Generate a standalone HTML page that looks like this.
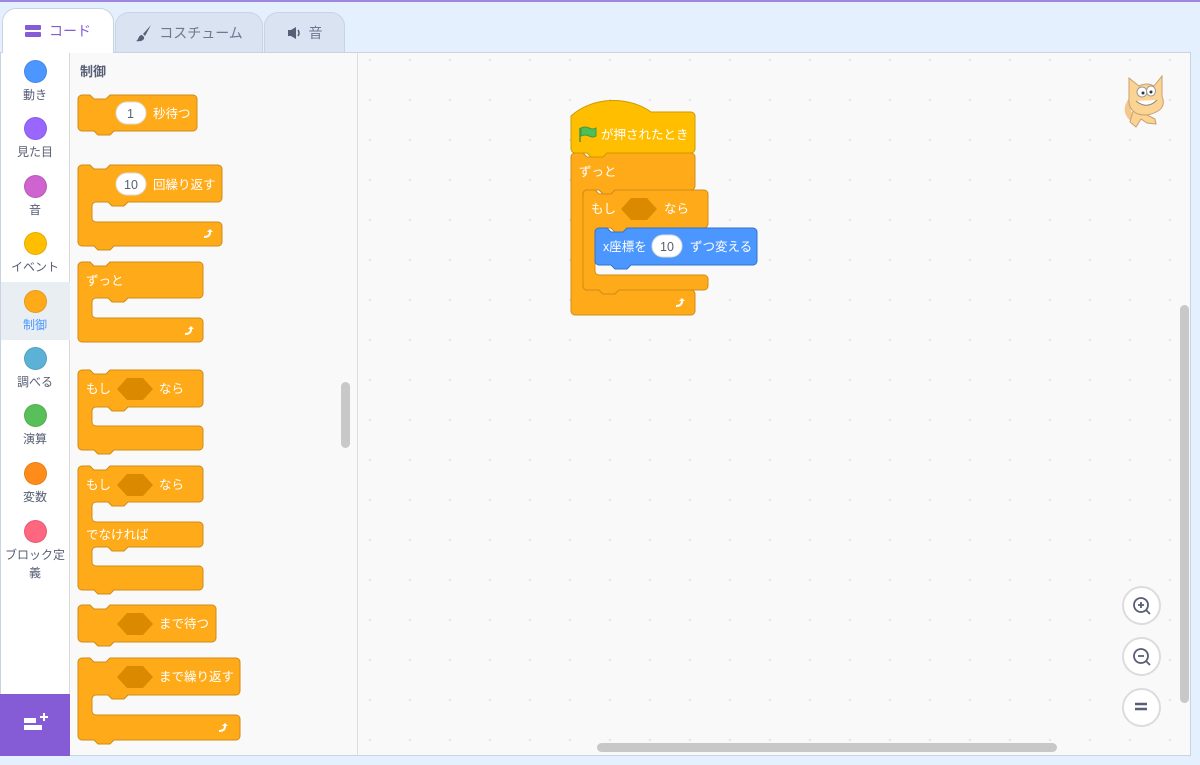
<!DOCTYPE html>
<html><head><meta charset="utf-8"><style>
*{margin:0;padding:0;box-sizing:border-box}
body{width:1200px;height:765px;background:#e5f0ff;font-family:"Liberation Sans","Noto Sans CJK JP",sans-serif;position:relative;overflow:hidden}
.abs{position:absolute}
.tab{position:absolute;top:12px;height:41px;border:1px solid #c9d4e3;border-bottom:none;border-radius:14px 14px 0 0;background:#d9e3f2;color:#6b7a8f;font-size:14px;display:flex;align-items:center;justify-content:center;gap:6px}
.cat{position:absolute;left:2px;width:66px;text-align:center;font-size:12px;color:#575e75}
.cat i{display:block;width:23px;height:23px;border-radius:50%;margin:0 auto 3px;border:1px solid rgba(0,0,0,.1)}
svg text{font-family:"Liberation Sans","Noto Sans CJK JP",sans-serif;font-size:12.5px;fill:#fff}
.zb{position:absolute;left:1122px;width:39px;height:39px;border-radius:50%;background:#fff;border:2px solid #dcdcdc}
</style></head><body>
<div class="abs" style="left:0;top:0;width:1200px;height:2px;background:#9f86e0"></div>
<div class="tab" style="left:2px;top:8px;width:112px;height:45px;background:#fff;color:#855cd6;z-index:2">
<svg width="18" height="14" viewBox="0 0 18 14"><rect x="0" y="1" width="16" height="5" rx="1" fill="#855cd6"/><rect x="0" y="8" width="16" height="5" rx="1" fill="#855cd6"/></svg>コード</div>
<div class="tab" style="left:115px;width:148px"><svg width="18" height="18" viewBox="0 0 18 18"><path d="M16 1 L8 10 L10 12 Z M7 11 C3 11 4 16 1 17 C6 18 10 16 9 13 Z" fill="#575e75"/></svg>コスチューム</div>
<div class="tab" style="left:264px;width:81px"><svg width="16" height="14" viewBox="0 0 16 14"><path d="M1 4h3l5-3v12l-5-3H1z" fill="#575e75"/><path d="M11 4q2 3 0 6" stroke="#575e75" stroke-width="1.5" fill="none"/></svg>音</div>
<div class="abs" style="left:0;top:52px;width:1191px;height:704px;background:#f9f9f9;border:1px solid #c9d4e3"></div>
<div class="abs" style="left:1px;top:53px;width:69px;height:641px;background:#fff;border-right:1px solid #d9d9d9"></div>
<div class="abs" style="left:1px;top:282px;width:69px;height:58px;background:#e9eef2"></div>
<div class="cat" style="top:60px"><i style="background:#4c97ff"></i>動き</div>
<div class="cat" style="top:117px"><i style="background:#9966ff"></i>見た目</div>
<div class="cat" style="top:175px"><i style="background:#cf63cf"></i>音</div>
<div class="cat" style="top:232px"><i style="background:#ffbf00"></i>イベント</div>
<div class="cat" style="top:290px;color:#4c97ff"><i style="background:#ffab19"></i>制御</div>
<div class="cat" style="top:347px"><i style="background:#5cb1d6"></i>調べる</div>
<div class="cat" style="top:404px"><i style="background:#59c059"></i>演算</div>
<div class="cat" style="top:462px"><i style="background:#ff8c1a"></i>変数</div>
<div class="cat" style="top:520px;line-height:18px;left:3px;width:64px"><i style="background:#ff6680"></i>ブロック定<br>義</div>
<div class="abs" style="left:0;top:694px;width:70px;height:62px;background:#855cd6"></div>
<svg class="abs" style="left:22px;top:711px" width="28" height="24" viewBox="0 0 28 24"><rect x="2" y="7" width="12" height="5" fill="#fff"/><rect x="2" y="14" width="18" height="5" fill="#fff"/><path d="M22 2v8M18 6h8" stroke="#fff" stroke-width="2"/></svg>
<div class="abs" style="left:357px;top:53px;width:1px;height:702px;background:#ddd"></div>
<div class="abs" style="left:358px;top:53px;width:832px;height:702px;background-image:radial-gradient(circle,#e2e2e2 1px,transparent 1.2px);background-size:40px 40px;background-position:-8px -13px"></div>
<div class="abs" style="left:80px;top:61px;font-size:13px;font-weight:bold;color:#575e75">制御</div>
<div class="abs" style="left:341px;top:382px;width:9px;height:66px;border-radius:5px;background:#c8c8c8"></div>
<div class="abs" style="left:1180px;top:305px;width:9px;height:398px;border-radius:5px;background:#c8c8c8"></div>
<div class="abs" style="left:597px;top:743px;width:460px;height:9px;border-radius:5px;background:#c8c8c8"></div>

<svg class="abs" style="left:0;top:0" width="1200" height="765">
<defs>
<path id="arr" d="M0 6q5 0 5-4l-2 0 3-3 3 3-2 0q0 6-7 6z" fill="#fff"/>
</defs>
<g fill="#ffab19" stroke="#cf8b17" stroke-width="1">
<path transform="translate(78,95)" d="M0 4a4 4 0 0 1 4-4h8l4 4h12l4-4H115a4 4 0 0 1 4 4V32a4 4 0 0 1-4 4H36l-4 4H20l-4-4H4a4 4 0 0 1-4-4z"/>
<path transform="translate(78,165)" d="M0 4a4 4 0 0 1 4-4h8l4 4h12l4-4H140a4 4 0 0 1 4 4V33a4 4 0 0 1-4 4H50l-4 4H34l-4-4H18a4 4 0 0 0-4 4V53a4 4 0 0 0 4 4H140a4 4 0 0 1 4 4V77a4 4 0 0 1-4 4H36l-4 4H20l-4-4H4a4 4 0 0 1-4-4z"/>
<path transform="translate(78,262)" d="M0 4a4 4 0 0 1 4-4h8l4 4h12l4-4H121a4 4 0 0 1 4 4V32a4 4 0 0 1-4 4H50l-4 4H34l-4-4H18a4 4 0 0 0-4 4V52a4 4 0 0 0 4 4H121a4 4 0 0 1 4 4V76a4 4 0 0 1-4 4H4a4 4 0 0 1-4-4z"/>
<path transform="translate(78,370)" d="M0 4a4 4 0 0 1 4-4h8l4 4h12l4-4H121a4 4 0 0 1 4 4V33a4 4 0 0 1-4 4H50l-4 4H34l-4-4H18a4 4 0 0 0-4 4V52a4 4 0 0 0 4 4H121a4 4 0 0 1 4 4V76a4 4 0 0 1-4 4H36l-4 4H20l-4-4H4a4 4 0 0 1-4-4z"/>
<path transform="translate(78,466)" d="M0 4a4 4 0 0 1 4-4h8l4 4h12l4-4H121a4 4 0 0 1 4 4V32a4 4 0 0 1-4 4H50l-4 4H34l-4-4H18a4 4 0 0 0-4 4V52a4 4 0 0 0 4 4H121a4 4 0 0 1 4 4V77a4 4 0 0 1-4 4H50l-4 4H34l-4-4H18a4 4 0 0 0-4 4V96a4 4 0 0 0 4 4H121a4 4 0 0 1 4 4V120a4 4 0 0 1-4 4H36l-4 4H20l-4-4H4a4 4 0 0 1-4-4z"/>
<path transform="translate(78,605)" d="M0 4a4 4 0 0 1 4-4h8l4 4h12l4-4H134a4 4 0 0 1 4 4V33a4 4 0 0 1-4 4H36l-4 4H20l-4-4H4a4 4 0 0 1-4-4z"/>
<path transform="translate(78,658)" d="M0 4a4 4 0 0 1 4-4h8l4 4h12l4-4H158a4 4 0 0 1 4 4V33a4 4 0 0 1-4 4H50l-4 4H34l-4-4H18a4 4 0 0 0-4 4V53a4 4 0 0 0 4 4H158a4 4 0 0 1 4 4V78a4 4 0 0 1-4 4H36l-4 4H20l-4-4H4a4 4 0 0 1-4-4z"/>
<path transform="translate(571,153)" d="M0 4a4 4 0 0 1 4-4h8l4 4h12l4-4H120a4 4 0 0 1 4 4V33a4 4 0 0 1-4 4H48l-4 4H32l-4-4H16a4 4 0 0 0-4 4V133a4 4 0 0 0 4 4H120a4 4 0 0 1 4 4V158a4 4 0 0 1-4 4H4a4 4 0 0 1-4-4z"/>
<path transform="translate(583,190)" d="M0 4a4 4 0 0 1 4-4h8l4 4h12l4-4H121a4 4 0 0 1 4 4V34a4 4 0 0 1-4 4H48l-4 4H32l-4-4H16a4 4 0 0 0-4 4V81a4 4 0 0 0 4 4H121a4 4 0 0 1 4 4V96a4 4 0 0 1-4 4H36l-4 4H20l-4-4H4a4 4 0 0 1-4-4z"/>
</g>
<path transform="translate(571,100)" d="M0 16C22 -4 58 -4 80 12H120a4 4 0 0 1 4 4V49a4 4 0 0 1-4 4H36l-4 4H20l-4-4H4a4 4 0 0 1-4-4z" fill="#ffbf00" stroke="#cc9900"/>
<path transform="translate(595,228)" d="M0 4a4 4 0 0 1 4-4h8l4 4h12l4-4H158a4 4 0 0 1 4 4V33a4 4 0 0 1-4 4H36l-4 4H20l-4-4H4a4 4 0 0 1-4-4z" fill="#4c97ff" stroke="#3373cc"/>
<g fill="#db8a00">
<path d="M117 389l10-11h16l10 11-10 11h-16z"/>
<path d="M117 485l10-11h16l10 11-10 11h-16z"/>
<path d="M117 624l10-11h16l10 11-10 11h-16z"/>
<path d="M117 677l10-11h16l10 11-10 11h-16z"/>
<path d="M621 209l10-11h16l10 11-10 11h-16z"/>
</g>
<g fill="#fff" stroke="#ddd">
<rect x="116" y="102" width="30" height="22" rx="11"/>
<rect x="116" y="173" width="30" height="22" rx="11"/>
<rect x="652" y="235" width="30" height="22" rx="11"/>
</g>
<g>
<text x="127" y="118" style="fill:#575e75">1</text>
<text x="153" y="118">秒待つ</text>
<text x="124" y="189" style="fill:#575e75">10</text>
<text x="153" y="189">回繰り返す</text>
<text x="86" y="285">ずっと</text>
<text x="86" y="393">もし</text><text x="159" y="393">なら</text>
<text x="86" y="489">もし</text><text x="159" y="489">なら</text>
<text x="86" y="539">でなければ</text>
<text x="159" y="628">まで待つ</text>
<text x="159" y="681">まで繰り返す</text>
<text x="601" y="139">が押されたとき</text>
<text x="579" y="176">ずっと</text>
<text x="591" y="213">もし</text><text x="664" y="213">なら</text>
<text x="603" y="251">x座標を</text>
<text x="660" y="251" style="fill:#575e75">10</text>
<text x="690" y="251">ずつ変える</text>
</g>
<use href="#arr" x="204" y="230"/>
<use href="#arr" x="185" y="327"/>
<use href="#arr" x="219" y="724"/>
<use href="#arr" x="676" y="299"/>
<path d="M580 128v14" stroke="#45993d" stroke-width="1.5"/>
<path d="M581 128q4-2 8 0t7 0v8q-3 2-7 0t-8 0z" fill="#4cbf56" stroke="#45993d"/>
<g transform="translate(1116,72)">
<path d="M14 30q-6 10 4 18" stroke="#f2c98a" stroke-width="6" fill="none" stroke-linecap="round"/>
<path d="M18 36l-4 14 6 5 5-8 6 4 9 1-1-5-8-4 3-8z" fill="#fbd494" stroke="#c8a070"/>
<path d="M13 26l0-20 10 8q8-4 15 0l8-10 0 20q4 10-4 15-10 6-20 3-10-4-9-16z" fill="#fbd494" stroke="#c8a070"/>
<ellipse cx="26" cy="20" rx="5" ry="5" fill="#fff" stroke="#999"/><ellipse cx="35" cy="19" rx="4.5" ry="5" fill="#fff" stroke="#999"/>
<circle cx="27" cy="21" r="1.5" fill="#333"/><circle cx="35" cy="20" r="1.5" fill="#333"/>
<path d="M20 29q11 9 21 -1" fill="#fff" stroke="#888"/>
</g>
</svg>
<div class="zb" style="top:586px"></div><div class="zb" style="top:637px"></div><div class="zb" style="top:688px"></div>
<svg class="abs" style="left:1122px;top:586px" width="39" height="141" viewBox="0 0 39 141">
<g stroke="#575e75" stroke-width="1.8" fill="none">
<circle cx="19" cy="19" r="7"/><path d="M24 24l4 4M19 16v6M16 19h6"/>
<circle cx="19" cy="70" r="7"/><path d="M24 75l4 4M16 70h6"/>
<path d="M13 118h12M13 123h12" stroke-width="2.5"/>
</g></svg>
</body></html>
